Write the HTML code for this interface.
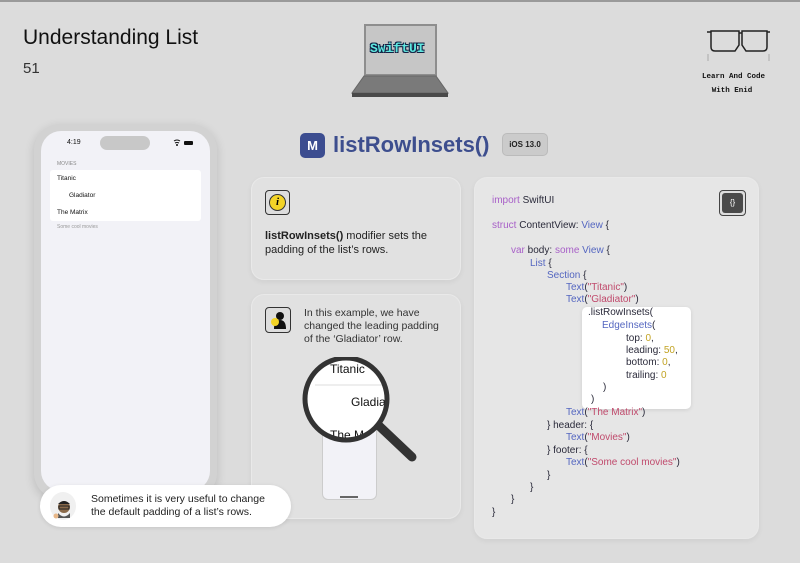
<!DOCTYPE html>
<html><head><meta charset="utf-8"><style>
*{margin:0;padding:0;box-sizing:border-box}
body{width:800px;height:563px;background:#dcdcdc;font-family:"Liberation Sans",sans-serif;position:relative;overflow:hidden;border-top:2px solid #9a9a9a}
.a{position:absolute;white-space:nowrap}
.card{position:absolute;background:#e1e1e1;border:1px solid #e9e9e9;border-radius:13px;box-shadow:0 2px 6px rgba(0,0,0,.06)}
.code{font-size:10px;color:#2a2a3a;line-height:12px}
.k{color:#a860c8}.t{color:#5466c0}.s{color:#c04a6c}.n{color:#c2a322}
</style></head><body>
<div class="a" style="left:23px;top:24px;font-size:21px;color:#111">Understanding List</div>
<div class="a" style="left:23px;top:58px;font-size:15px;color:#333">51</div>

<!-- laptop -->
<div class="a" style="left:364px;top:22px;width:73px;height:52px;background:#c6c6c6;border:2px solid #8e8e8e"></div>
<div class="a" style="left:370px;top:39px;font-family:'Liberation Mono',monospace;font-weight:bold;font-size:13px;color:#5ee8e0;text-shadow:1px 1px 0 #124,-1px -1px 0 #124,1px -1px 0 #124,-1px 1px 0 #124">SwiftUI</div>
<svg class="a" style="left:350px;top:73px" width="100" height="24"><polygon points="14,1 86,1 98,18 2,18" fill="#7a7a7a" stroke="#666"/><rect x="2" y="18" width="96" height="4" fill="#4a4a4a"/></svg>

<!-- glasses -->
<svg class="a" style="left:705px;top:25px" width="66" height="36"><g fill="none" stroke="#222" stroke-width="1.5"><path d="M6 4 H34 V18 L30 24 H10 Q6 24 6 20 Z"/><path d="M37 4 H62 V20 Q62 24 58 24 H41 L37 18 Z"/><path d="M34 6 H37 M2 5 H6 M62 5 H65"/></g><path d="M3 27 V34 M64 27 V34" stroke="#aaa"/></svg>
<div class="a" style="left:702px;top:68px;width:60px;text-align:center;font-family:'Liberation Mono',monospace;font-weight:bold;font-size:7.5px;line-height:14px;color:#111">Learn And Code<br>With Enid</div>

<!-- phone -->
<div class="a" style="left:34px;top:122px;width:183px;height:375px;border-radius:26px;background:#d2d2d2;box-shadow:0 3px 10px rgba(0,0,0,.15)"></div>
<div class="a" style="left:41px;top:129px;width:169px;height:360px;border-radius:20px;background:#f2f2f7"></div>
<div class="a" style="left:67px;top:137px;font-size:7px;color:#111">4:19</div>
<div class="a" style="left:100px;top:134px;width:50px;height:14px;border-radius:7px;background:#c8c8c8"></div>
<svg class="a" style="left:165px;top:137px" width="30" height="8"><path d="M9 2 Q12 0 15 2 M10 4 Q12 3 14 4" stroke="#111" fill="none"/><circle cx="12" cy="6" r="1" fill="#111"/><rect x="19" y="2" width="9" height="4" rx="1" fill="#111"/></svg>
<div class="a" style="left:57px;top:159px;font-size:5px;color:#888">MOVIES</div>
<div class="a" style="left:50px;top:168px;width:151px;height:51px;background:#fff;border-radius:3px"></div>
<div class="a" style="left:57px;top:173px;font-size:6.5px;color:#111">Titanic</div>
<div class="a" style="left:69px;top:190px;font-size:6.5px;color:#111">Gladiator</div>
<div class="a" style="left:57px;top:207px;font-size:6.5px;color:#111">The Matrix</div>
<div class="a" style="left:57px;top:222px;font-size:5px;color:#999">Some cool movies</div>

<!-- title -->
<div class="a" style="left:300px;top:131px;width:25px;height:25px;border-radius:5px;background:#3c4d90;color:#fff;font-size:13px;font-weight:bold;text-align:center;line-height:25px">M</div>
<div class="a" style="left:333px;top:130px;font-size:22px;font-weight:bold;color:#3d4e8e">listRowInsets()</div>
<div class="a" style="left:502px;top:131px;width:46px;height:23px;border-radius:5px;background:#cbcbcb;border:1px solid #bbb;font-size:8px;font-weight:bold;text-align:center;line-height:21px;color:#222">iOS 13.0</div>

<!-- card1 -->
<div class="card" style="left:251px;top:175px;width:210px;height:103px"></div>
<div class="a" style="left:265px;top:188px;width:25px;height:25px;border:1px solid #333;border-radius:4px;background:#ddd"></div>
<div class="a" style="left:269px;top:192px;width:17px;height:17px;border-radius:50%;background:#f3d427;border:1px solid #333;font-size:11px;font-weight:bold;font-style:italic;text-align:center;line-height:15px;font-family:'Liberation Serif',serif">i</div>
<div class="a" style="left:265px;top:228px;font-size:11px;line-height:13.5px;color:#222"><b>listRowInsets()</b> modifier sets the<br>padding of the list’s rows.</div>

<!-- card2 -->
<div class="card" style="left:251px;top:292px;width:210px;height:225px"></div>
<div class="a" style="left:265px;top:305px;width:26px;height:26px;border:1px solid #333;border-radius:4px;background:#ddd"></div>
<svg class="a" style="left:267px;top:307px" width="22" height="22"><circle cx="13" cy="7" r="4" fill="#111"/><path d="M7 20 Q7 11 13 11 Q19 11 19 20Z" fill="#111"/><circle cx="8" cy="13" r="4" fill="#f3d427"/></svg>
<div class="a" style="left:304px;top:305px;font-size:10.5px;line-height:13px;color:#333">In this example, we have<br>changed the leading padding<br>of the ‘Gladiator’ row.</div>
<div class="a" style="left:322px;top:420px;width:55px;height:78px;background:#f2f2f7;border:1px solid #ccc;border-radius:6px"></div>
<div class="a" style="left:340px;top:494px;width:18px;height:2px;background:#666"></div>
<svg class="a" style="left:300px;top:355px" width="120" height="110">
<defs><clipPath id="c"><circle cx="46" cy="42" r="39"/></clipPath></defs>
<line x1="75" y1="65" x2="112" y2="100" stroke="#333" stroke-width="9" stroke-linecap="round"/>
<circle cx="46" cy="42" r="41" fill="#fff"/>
<g clip-path="url(#c)" font-family="Liberation Sans, sans-serif" font-size="12" fill="#111">
<text x="30" y="16">Titanic</text>
<line x1="15" y1="28" x2="90" y2="28" stroke="#ddd"/>
<text x="51" y="49">Gladiator</text>
<text x="30" y="82">The Matrix</text>
</g>
<circle cx="46" cy="42" r="41" fill="none" stroke="#333" stroke-width="5"/>
</svg>

<!-- code card -->
<div class="card" style="left:474px;top:175px;width:285px;height:362px;background:#e6e6e6"></div>
<div class="a" style="left:719px;top:188px;width:27px;height:26px;border:1px solid #444;border-radius:4px;background:#ddd"></div>
<div class="a" style="left:722px;top:191px;width:21px;height:20px;border-radius:3px;background:#4a4a4a;color:#fff;font-size:8px;text-align:center;line-height:20px">{}</div>
<div class="a" style="left:582px;top:305px;width:109px;height:102px;background:#fff;border-radius:5px;box-shadow:0 1px 4px rgba(0,0,0,.1)"></div>
<div class="a code" style="left:492px;top:193px"><span class="k">import</span> SwiftUI</div>
<div class="a code" style="left:492px;top:218px"><span class="k">struct</span> ContentView: <span class="t">View</span> {</div>
<div class="a code" style="left:511px;top:243px"><span class="k">var</span> body: <span class="k">some</span> <span class="t">View</span> {</div>
<div class="a code" style="left:530px;top:256px"><span class="t">List</span> {</div>
<div class="a code" style="left:547px;top:268px"><span class="t">Section</span> {</div>
<div class="a code" style="left:566px;top:280px"><span class="t">Text</span>(<span class="s">"Titanic"</span>)</div>
<div class="a code" style="left:566px;top:292px"><span class="t">Text</span>(<span class="s">"Gladiator"</span>)</div>
<div class="a code" style="left:588px;top:305px">.listRowInsets(</div>
<div class="a code" style="left:602px;top:318px"><span class="t">EdgeInsets</span>(</div>
<div class="a code" style="left:626px;top:331px">top: <span class="n">0</span>,</div>
<div class="a code" style="left:626px;top:343px">leading: <span class="n">50</span>,</div>
<div class="a code" style="left:626px;top:355px">bottom: <span class="n">0</span>,</div>
<div class="a code" style="left:626px;top:368px">trailing: <span class="n">0</span></div>
<div class="a code" style="left:603px;top:380px">)</div>
<div class="a code" style="left:591px;top:392px">)</div>
<div class="a code" style="left:566px;top:405px"><span class="t">Text</span>(<span class="s">"The Matrix"</span>)</div>
<div class="a code" style="left:547px;top:418px">} header: {</div>
<div class="a code" style="left:566px;top:430px"><span class="t">Text</span>(<span class="s">"Movies"</span>)</div>
<div class="a code" style="left:547px;top:443px">} footer: {</div>
<div class="a code" style="left:566px;top:455px"><span class="t">Text</span>(<span class="s">"Some cool movies"</span>)</div>
<div class="a code" style="left:547px;top:468px">}</div>
<div class="a code" style="left:530px;top:480px">}</div>
<div class="a code" style="left:511px;top:492px">}</div>
<div class="a code" style="left:492px;top:505px">}</div>

<!-- bubble -->
<div class="a" style="left:40px;top:483px;width:251px;height:42px;border-radius:21px;background:#fff;box-shadow:0 1px 4px rgba(0,0,0,.1)"></div>
<div class="a" style="left:50px;top:490px;width:26px;height:28px;border-radius:50%;background:#f0f0f0"></div>
<svg class="a" style="left:50px;top:488px" width="26" height="32"><circle cx="14" cy="17" r="6" fill="#8a6a4a"/><path d="M8 14 Q14 8 20 14Z" fill="#222"/><rect x="9" y="16" width="10" height="3" fill="none" stroke="#222"/><path d="M8 23 Q14 30 20 23 V28 H8Z" fill="#555"/><circle cx="6" cy="26" r="2.5" fill="#e8b88a"/></svg>
<div class="a" style="left:91px;top:491px;font-size:10.5px;line-height:13px;color:#222">Sometimes it is very useful to change<br>the default padding of a list’s rows.</div>
</body></html>
